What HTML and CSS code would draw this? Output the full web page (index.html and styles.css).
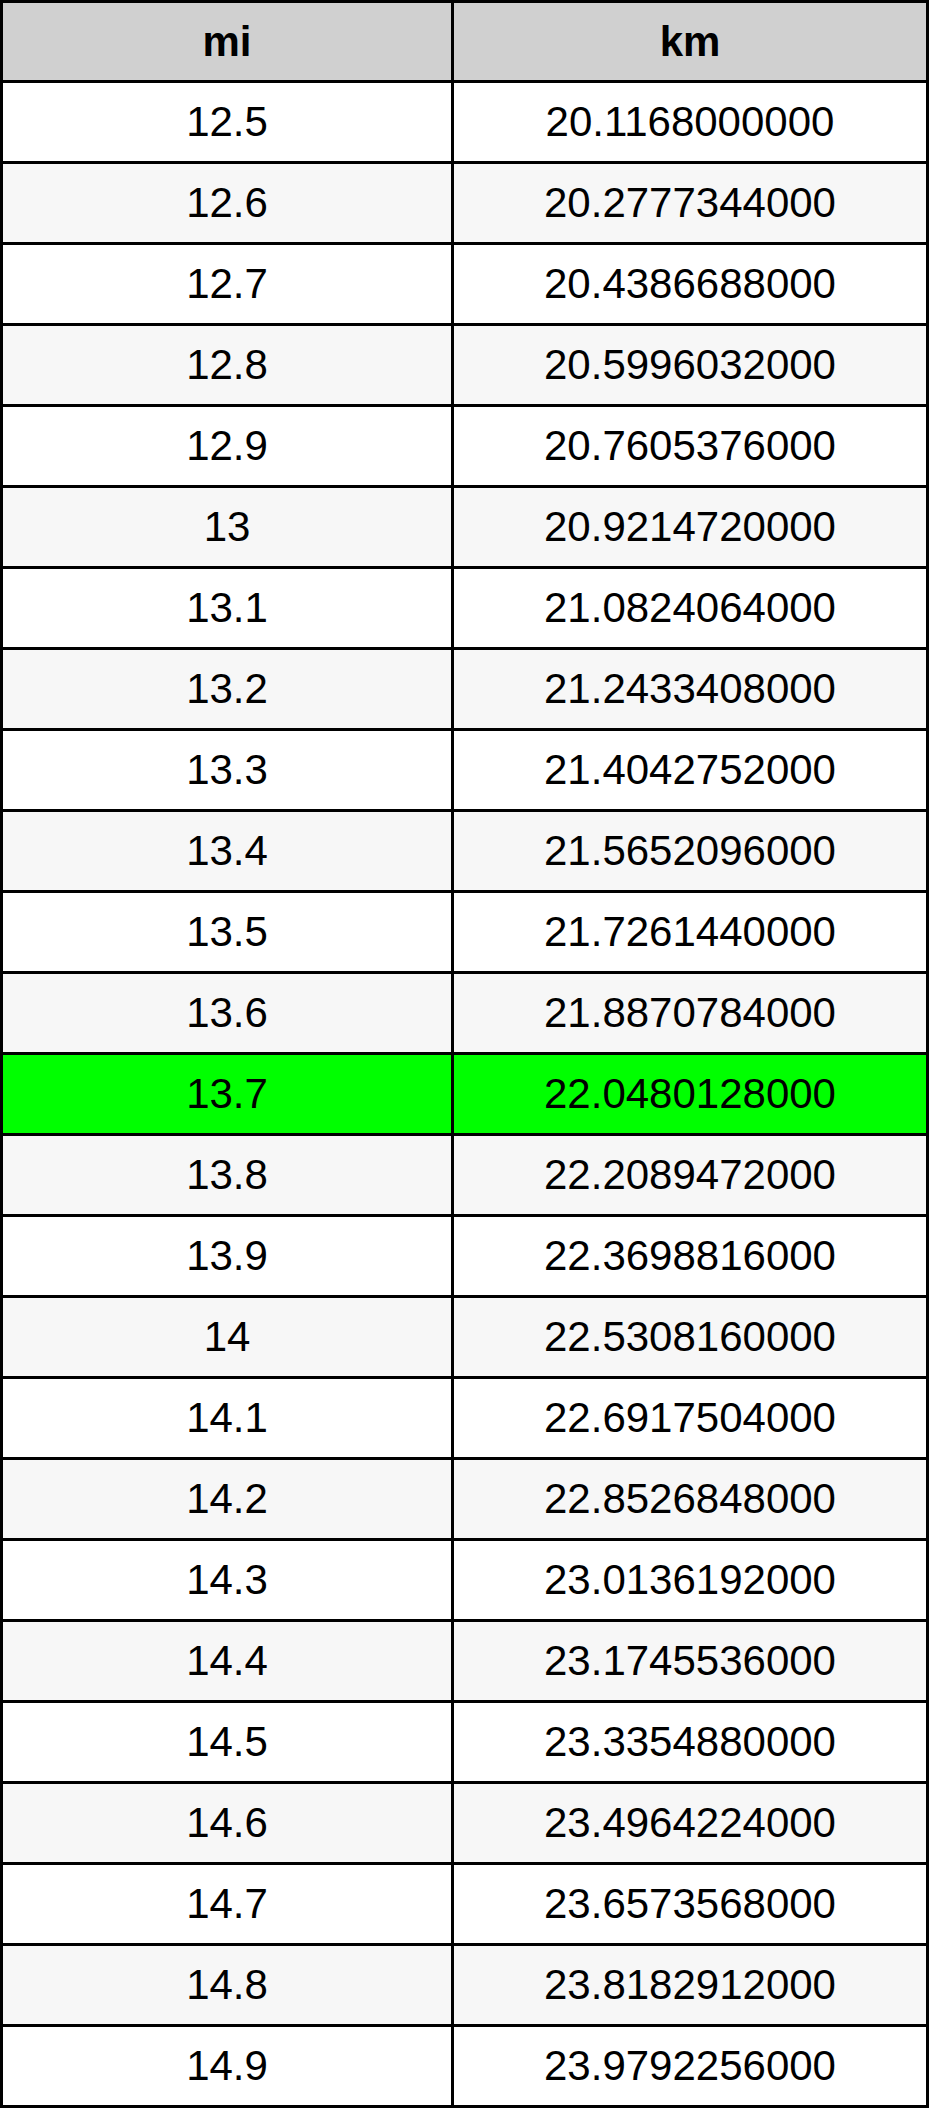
FILE: index.html
```html
<!DOCTYPE html>
<html>
<head>
<meta charset="utf-8">
<link rel="stylesheet" href="styles.css">
</head>
<body>
<table class="conv">
<thead>
<tr class="head"><th class="c1">mi</th><th class="c2">km</th></tr>
</thead>
<tbody>
<tr><td>12.5</td><td>20.1168000000</td></tr>
<tr class="alt"><td>12.6</td><td>20.2777344000</td></tr>
<tr><td>12.7</td><td>20.4386688000</td></tr>
<tr class="alt"><td>12.8</td><td>20.5996032000</td></tr>
<tr><td>12.9</td><td>20.7605376000</td></tr>
<tr class="alt"><td>13</td><td>20.9214720000</td></tr>
<tr><td>13.1</td><td>21.0824064000</td></tr>
<tr class="alt"><td>13.2</td><td>21.2433408000</td></tr>
<tr><td>13.3</td><td>21.4042752000</td></tr>
<tr class="alt"><td>13.4</td><td>21.5652096000</td></tr>
<tr><td>13.5</td><td>21.7261440000</td></tr>
<tr class="alt"><td>13.6</td><td>21.8870784000</td></tr>
<tr class="hl"><td>13.7</td><td>22.0480128000</td></tr>
<tr class="alt"><td>13.8</td><td>22.2089472000</td></tr>
<tr><td>13.9</td><td>22.3698816000</td></tr>
<tr class="alt"><td>14</td><td>22.5308160000</td></tr>
<tr><td>14.1</td><td>22.6917504000</td></tr>
<tr class="alt"><td>14.2</td><td>22.8526848000</td></tr>
<tr><td>14.3</td><td>23.0136192000</td></tr>
<tr class="alt"><td>14.4</td><td>23.1745536000</td></tr>
<tr><td>14.5</td><td>23.3354880000</td></tr>
<tr class="alt"><td>14.6</td><td>23.4964224000</td></tr>
<tr><td>14.7</td><td>23.6573568000</td></tr>
<tr class="alt"><td>14.8</td><td>23.8182912000</td></tr>
<tr><td>14.9</td><td>23.9792256000</td></tr>
</tbody>
</table>
</body>
</html>
```

FILE: styles.css
```css
html, body {
  margin: 0;
  padding: 0;
  background: #ffffff;
}

.conv {
  border-collapse: separate;
  border-spacing: 0;
  border-top: 3px solid #000;
  border-left: 3px solid #000;
  table-layout: fixed;
  width: 929px;
  font-family: "Liberation Sans", Arial, sans-serif;
  font-size: 42px;
  color: #000;
}

.conv th,
.conv td {
  border-right: 3px solid #000;
  border-bottom: 3px solid #000;
  padding: 0;
  text-align: center;
  vertical-align: middle;
  box-sizing: border-box;
}

.conv th {
  height: 80px;
  font-weight: bold;
  background: #d0d0d0;
}

.conv td {
  height: 81px;
  background: #ffffff;
}

.conv .c1 {
  width: 451px;
}

.conv .c2 {
  width: 475px;
}

.conv tr.alt td {
  background: #f7f7f7;
}

.conv tr.hl td {
  background: #00ff00;
}
```
